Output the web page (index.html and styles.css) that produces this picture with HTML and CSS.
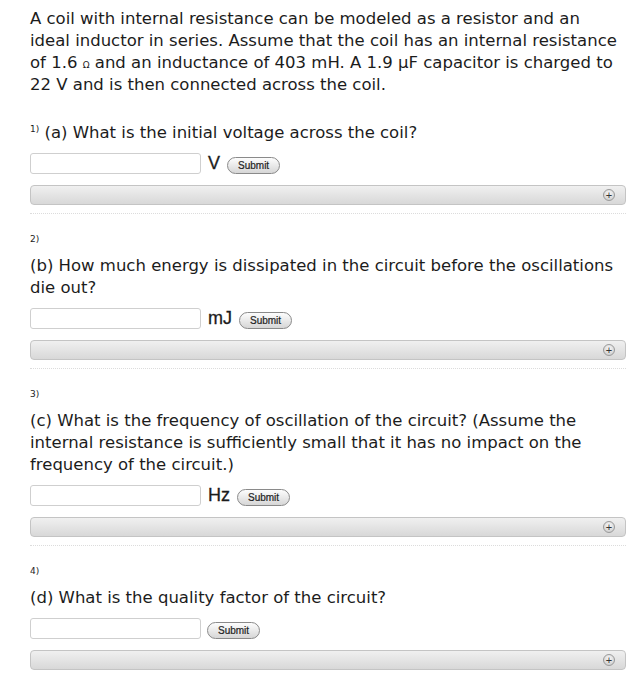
FILE: index.html
```html
<!DOCTYPE html>
<html>
<head>
<meta charset="utf-8">
<link rel="stylesheet" href="styles.css">
</head>
<body>
<div class="page">
  <p class="intro">A coil with internal resistance can be modeled as a resistor and an ideal inductor in series. Assume that the coil has an internal resistance of 1.6 <span class="ohm">Ω</span> and an inductance of 403 mH. A 1.9 μF capacitor is charged to 22 V and is then connected across the coil.</p>

  <div class="q q1">
    <p class="qtext"><sup class="num-inline">1)</sup> (a) What is the initial voltage across the coil?</p>
    <div class="answer"><input class="field" type="text"><span class="unit">V</span><button class="submit">Submit</button></div>
    <div class="bar"><span class="plus">+</span></div>
    <div class="sep"></div>
  </div>

  <div class="q">
    <div class="num">2)</div>
    <p class="qtext">(b) How much energy is dissipated in the circuit before the oscillations die out?</p>
    <div class="answer"><input class="field" type="text"><span class="unit">mJ</span><button class="submit">Submit</button></div>
    <div class="bar"><span class="plus">+</span></div>
    <div class="sep"></div>
  </div>

  <div class="q">
    <div class="num">3)</div>
    <p class="qtext">(c) What is the frequency of oscillation of the circuit? (Assume the internal resistance is sufficiently small that it has no impact on the frequency of the circuit.)</p>
    <div class="answer"><input class="field" type="text"><span class="unit">Hz</span><button class="submit">Submit</button></div>
    <div class="bar"><span class="plus">+</span></div>
    <div class="sep"></div>
  </div>

  <div class="q">
    <div class="num">4)</div>
    <p class="qtext">(d) What is the quality factor of the circuit?</p>
    <div class="answer"><input class="field" type="text"><button class="submit submit-first">Submit</button></div>
    <div class="bar"><span class="plus">+</span></div>
  </div>
</div>
</body>
</html>
```

FILE: styles.css
```css
html, body {
  margin: 0;
  padding: 0;
  background: #fff;
}
.page {
  width: 596px;
  padding: 8px 0 0 30px;
  font-family: "DejaVu Sans", Verdana, sans-serif;
  font-size: 16.5px;
  color: #1c1c1c;
}
.intro {
  margin: 0;
  width: 592px;
  line-height: 22px;
}
.ohm {
  font-size: 9px;
  line-height: 0;
}
.q1 {
  margin-top: 26px;
}
.qtext {
  margin: 0;
  width: 592px;
  line-height: 22px;
}
.num-inline {
  font-size: 9px;
  vertical-align: 6px;
  line-height: 0;
}
.num {
  font-size: 9px;
  font-family: "DejaVu Sans", Verdana, sans-serif;
  line-height: 12px;
  margin: 19px 0 10px;
}
.answer {
  display: flex;
  align-items: center;
  margin-top: 9px;
  height: 21px;
}
.field {
  box-sizing: border-box;
  width: 171px;
  height: 21px;
  border: 1px solid #cfcfcf;
  border-radius: 3px;
  margin: 0;
  padding: 0 4px;
  background: #fff;
}
.unit {
  font-family: "Liberation Sans", Arial, sans-serif;
  font-size: 18px;
  margin-left: 7px;
  color: #1c1c1c;
  -webkit-text-stroke: 0.3px #1c1c1c;
}
.submit {
  margin-left: 7px;
  margin-top: 3px;
  height: 17px;
  padding: 0 10px;
  border: 1px solid #8a8a8a;
  border-radius: 9px;
  background: linear-gradient(#fdfdfd, #d6d6d6);
  font-family: "Liberation Sans", Arial, sans-serif;
  font-size: 10px;
  color: #222;
  line-height: 15px;
  -webkit-text-stroke: 0.2px #222;
}
.submit-first {
  margin-left: 6px;
}
.bar {
  box-sizing: border-box;
  margin-top: 11px;
  height: 20px;
  width: 596px;
  border: 1px solid #c4c4c4;
  border-radius: 4px;
  background: linear-gradient(#f0f0f0, #d8d8d8);
  display: flex;
  align-items: center;
  justify-content: flex-end;
  padding-right: 10px;
}
.plus {
  box-sizing: border-box;
  width: 12px;
  height: 12px;
  border-radius: 50%;
  border: 1px solid #9a9a9a;
  background: radial-gradient(circle at 50% 35%, #fafafa, #c4c4c4);
  font-family: "Liberation Sans", Arial, sans-serif;
  font-size: 11px;
  line-height: 10px;
  text-align: center;
  color: #333;
}
.sep {
  margin-top: 8px;
  width: 596px;
  border-top: 1px dotted #dcdcdc;
}
```
